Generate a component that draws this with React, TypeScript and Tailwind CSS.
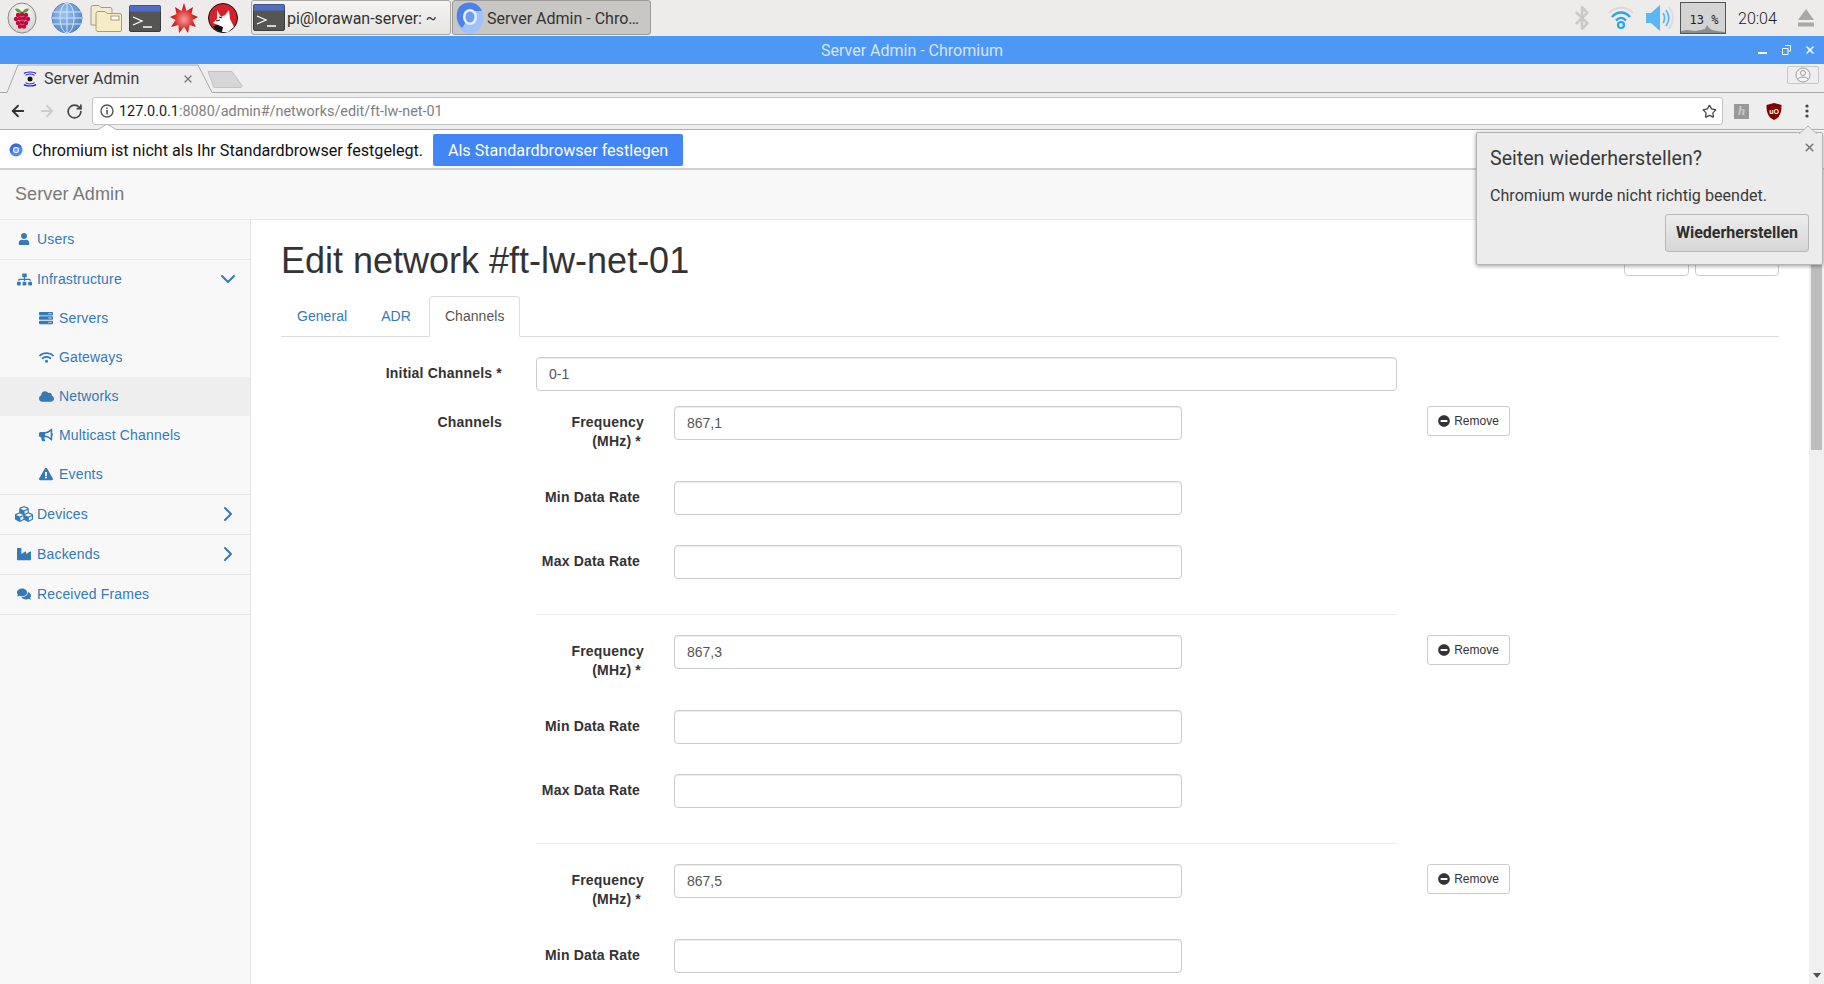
import React from "react";
import { ArrowLeft, ArrowRight, RotateCw, Star, X, ChevronDown, ChevronRight, Bluetooth } from "lucide-react";
import { FaUser, FaSitemap, FaServer, FaWifi, FaCloud, FaBullhorn, FaExclamationTriangle, FaCubes, FaIndustry, FaComments, FaMinusCircle } from "react-icons/fa";

const Raspberry = () => (
  <svg width="30" height="32" viewBox="0 0 30 32" className="shrink-0">
    <defs>
      <radialGradient id="rb" cx="50%" cy="35%" r="70%"><stop offset="0%" stopColor="#ffffff" /><stop offset="100%" stopColor="#cfcdc9" /></radialGradient>
    </defs>
    <ellipse cx="15" cy="16" rx="14" ry="15" fill="url(#rb)" stroke="#8a8a86" />
    <path d="M15 10C12 6 9 6 8 7c1 3 4 4 7 4 3 0 6-1 7-4-1-1-4-1-7 3z" fill="#5aa02c" />
    {[[11,13],[15,12.5],[19,13],[9,17],[13,16.5],[17,16.5],[21,17],[11,21],[15,20.5],[19,21],[13,24.5],[17,24.5]].map(([x,y],i)=>(
      <circle key={i} cx={x} cy={y} r="2.2" fill="#c7053d" />
    ))}
  </svg>
);
const Globe = () => (
  <svg width="32" height="32" viewBox="0 0 32 32" className="shrink-0">
    <defs><radialGradient id="gl" cx="40%" cy="35%" r="75%"><stop offset="0%" stopColor="#9cc3ee" /><stop offset="100%" stopColor="#4a82c8" /></radialGradient></defs>
    <circle cx="16" cy="16" r="15" fill="url(#gl)" stroke="#5a84b8" />
    <g stroke="#d6e6f7" strokeWidth="1" fill="none">
      <ellipse cx="16" cy="16" rx="7" ry="15" /><path d="M16 1v30M2 10h28M1 16h30M2 22h28" />
    </g>
  </svg>
);
const Folders = () => (
  <svg width="32" height="28" viewBox="0 0 32 28" className="shrink-0">
    <path d="M1 3.500a2 2 0 0 1 2-2h6l2 2h9a2 2 0 0 1 2 2V21H1z" fill="#f3ecd2" stroke="#a69a78" />
    <path d="M6 9.500a2 2 0 0 1 2-2h7l2 2h13a1.500 1.500 0 0 1 1.500 1.500v15a1.500 1.500 0 0 1-1.500 1.500H8a2 2 0 0 1-2-2z" fill="#f6edc6" stroke="#a69a78" />
    <rect x="21" y="12" width="8" height="4" fill="#fff" stroke="#a69a78" />
  </svg>
);
const Terminal = ({ w = 32, h = 27 }: { w?: number; h?: number }) => (
  <svg width={w} height={h} viewBox="0 0 32 27" className="shrink-0">
    <rect x="0.500" y="0.500" width="31" height="26" rx="1.500" fill="#555553" stroke="#3c3c3c" />
    <rect x="0.500" y="0.500" width="31" height="6" fill="#4f6fc4" />
    <path d="M4 12l9 4-9 4" stroke="#fff" fill="none" strokeWidth="1.300" />
    <path d="M14 22h9" stroke="#fff" strokeWidth="1.500" />
  </svg>
);
const Burst = () => (
  <svg width="28" height="30" viewBox="0 0 28 30" className="shrink-0">
    <defs><radialGradient id="bu" cx="50%" cy="55%" r="55%"><stop offset="0%" stopColor="#f6a0a0" /><stop offset="60%" stopColor="#dc2c2c" /><stop offset="100%" stopColor="#a80f0f" /></radialGradient></defs>
    <polygon points="14,0 16.500,8 23,4 21.500,11 28,14 22.500,17 26,24 19.500,22 18,30 14,24 9,30 8.500,22 1,24 5.500,17 0,14 6.500,11 5,4 11.500,8" fill="url(#bu)" />
  </svg>
);
const Fox = () => (
  <svg width="30" height="30" viewBox="0 0 30 30" className="shrink-0">
    <circle cx="15" cy="15" r="14.500" fill="#d8202a" stroke="#111" strokeWidth="1" />
    <path d="M5 24a14 14 0 0 0 18 3l-4-6-8-1z" fill="#111" />
    <path d="M9 7l4 7 4-2 4-5 1 9 4 8-6 5h-6l1-5-5-2-5-2 4-4z" fill="#fff" />
    <path d="M8 18l4-1M11 14l3 1" stroke="#111" strokeWidth="1" fill="none" />
  </svg>
);
const ChromiumLogo = () => (
  <svg width="28" height="32" viewBox="0 0 28 32" className="shrink-0">
    <ellipse cx="14" cy="16" rx="13.500" ry="15.500" fill="#9fc3f8" />
    <path d="M14 .5C7 .5 2 4 1 11c-1 6 1 11 5 15l6-9-1-8h15C24 4 19 .5 14 .5z" fill="#4c82e8" />
    <ellipse cx="14" cy="15" rx="7" ry="8" fill="#e8eefb" />
    <ellipse cx="14" cy="15" rx="4.500" ry="5.500" fill="#6b9df0" />
  </svg>
);
const Favicon = () => (
  <svg width="14" height="16" viewBox="0 0 14 16" className="shrink-0">
    <circle cx="7" cy="8" r="2.500" fill="#111" />
    <path d="M2.500 4.500C4 2.500 10 2.500 11.500 4.500M1 2.500C3 .5 11 .5 13 2.500M2.500 11.500C4 13.500 10 13.500 11.500 11.500M1 13.500C3 15.500 11 15.500 13 13.500" stroke="#1414e0" strokeWidth="1.200" fill="none" />
  </svg>
);
const Wifi = () => (
  <svg width="26" height="24" viewBox="0 0 26 24" className="shrink-0">
    <path d="M1 7C8 0 18 0 25 7" stroke="#d9d9d9" strokeWidth="2" fill="none" />
    <path d="M4 11C9 5 17 5 22 11M8 14.500C11 11 15 11 18 14.500" stroke="#2aa3f3" strokeWidth="2.400" fill="none" />
    <circle cx="13" cy="19" r="3" stroke="#2aa3f3" strokeWidth="2.200" fill="none" />
  </svg>
);
const Speaker = () => (
  <svg width="28" height="26" viewBox="0 0 28 26" className="shrink-0">
    <path d="M0 8h5l9-8v26l-9-8H0z" fill="#5ab7f5" />
    <path d="M17 8c2 3 2 7 0 10M20 5c3.500 5 3.500 11 0 16" stroke="#5ab7f5" strokeWidth="1.800" fill="none" />
    <path d="M23 2c5 7 5 15 0 22" stroke="#dcdcdc" strokeWidth="1.800" fill="none" />
  </svg>
);
const Eject = () => (
  <svg width="18" height="18" viewBox="0 0 18 18" className="shrink-0">
    <path d="M9 0l8 11H1z" fill="#a8a8a8" /><rect x="1" y="13.500" width="16" height="4" fill="#a8a8a8" />
  </svg>
);
const Shield = () => (
  <svg width="16" height="17" viewBox="0 0 16 17" className="shrink-0">
    <path d="M8 0l7.500 2c0 7-1 12-7.500 15C1.500 14 .5 9 .5 2z" fill="#800000" />
    <text x="8" y="10.500" textAnchor="middle" fontSize="7" fontWeight="700" fill="#fff" fontFamily="Liberation Sans, sans-serif">uO</text>
  </svg>
);
const Dots = () => (
  <svg width="4" height="14" viewBox="0 0 4 14"><circle cx="2" cy="2" r="1.600" fill="#444" /><circle cx="2" cy="7" r="1.600" fill="#444" /><circle cx="2" cy="12" r="1.600" fill="#444" /></svg>
);
const InfoCircle = () => (
  <svg width="14" height="14" viewBox="0 0 14 14" className="shrink-0">
    <circle cx="7" cy="7" r="6" fill="none" stroke="#555" strokeWidth="1.400" />
    <rect x="6.200" y="6" width="1.600" height="4.500" fill="#555" /><rect x="6.200" y="3.500" width="1.600" height="1.600" fill="#555" />
  </svg>
);
const SmallChromium = () => (
  <svg width="14" height="14" viewBox="0 0 14 14" className="shrink-0">
    <circle cx="7" cy="7" r="6.500" fill="#4c8bf5" /><path d="M7 .5a6.500 6.500 0 0 1 5.800 3.500H7a3 3 0 0 0-3 3l-2 3.500A6.500 6.500 0 0 1 7 .5z" fill="#3a6fd8" />
    <circle cx="7" cy="7" r="3" fill="#fff" /><circle cx="7" cy="7" r="2" fill="#6ea2f8" />
  </svg>
);
const Profile = () => (
  <svg width="16" height="16" viewBox="0 0 16 16">
    <circle cx="8" cy="8" r="7" fill="#f4f4f4" stroke="#9a9a9a" /><circle cx="8" cy="6" r="2.500" fill="none" stroke="#9a9a9a" /><path d="M3 12c1-2.500 9-2.500 10 0" fill="none" stroke="#9a9a9a" />
  </svg>
);

const Top = ({ icon, label, chevron }: { icon: React.ReactNode; label: string; chevron?: "down" | "right" }) => (
  <div className="h-[39px] flex items-center pl-[15px] pr-[10px] pb-px">
    <span className="w-[18px] flex justify-center shrink-0">{icon}</span>
    <span className="ml-1 tracking-[0.17px]">{label}</span>
    {chevron === "down" && <ChevronDown size={24} strokeWidth={2} className="ml-auto" />}
    {chevron === "right" && <ChevronRight size={24} strokeWidth={2} className="ml-auto" />}
  </div>
);
const Sub = ({ icon, label, active }: { icon: React.ReactNode; label: string; active?: boolean }) => (
  <div className={"h-[39px] flex items-center pl-[37px] pb-px " + (active ? "bg-[#eeeeee]" : "")}>
    <span className="w-[18px] flex justify-center shrink-0">{icon}</span>
    <span className="ml-1 tracking-[0.17px]">{label}</span>
  </div>
);

const inputCls = "h-[34px] border border-[#cccccc] rounded bg-white px-3 text-sm text-[#555555] flex items-center shadow-[inset_0_1px_1px_rgba(0,0,0,0.075)]";
const labelCls = "text-right font-bold pt-[7px] leading-[19px] text-[#333333] tracking-[0.19px]";

const Channel = ({ freq, partial }: { freq: string; partial?: boolean }) => (
  <div className="flex items-start">
    <div className="w-[861px]">
      <div className="flex h-[75px]">
        <div className={labelCls + " w-[108px]"}>
          <div>Frequency</div>
          <div className="pr-[3px]">(MHz) *</div>
        </div>
        <div className={inputCls + " ml-[30px] w-[508px]"}>{freq}</div>
      </div>
      <div className="flex h-[64px]">
        <div className={labelCls + " w-[104px] whitespace-nowrap"}>Min Data Rate</div>
        <div className={inputCls + " ml-[34px] w-[508px]"}></div>
      </div>
      {!partial && (
        <>
          <div className="flex h-[69px]">
            <div className={labelCls + " w-[104px] whitespace-nowrap"}>Max Data Rate</div>
            <div className={inputCls + " ml-[34px] w-[508px]"}></div>
          </div>
          <div className="h-px bg-[#eeeeee] mb-5"></div>
        </>
      )}
    </div>
    <div className="ml-[30px] w-[83px] h-[30px] border border-[#cccccc] rounded-[3px] bg-white flex items-center justify-center gap-1 text-xs text-[#333333]">
      <FaMinusCircle size={12} />
      <span>Remove</span>
    </div>
  </div>
);

export default function App() {
  return (
    <div className="relative w-[1824px] h-[984px] overflow-hidden flex flex-col bg-white font-['Liberation_Sans',Arial,sans-serif] text-sm">
      {/* panel */}
      <div className="h-9 shrink-0 bg-[#edecea] flex items-center font-['Roboto',sans-serif] text-base text-[#333333]">
        <div className="ml-[7px]"><Raspberry /></div>
        <div className="ml-[14px]"><Globe /></div>
        <div className="ml-[7px]"><Folders /></div>
        <div className="ml-[7px]"><Terminal /></div>
        <div className="ml-[9px]"><Burst /></div>
        <div className="ml-[10px]"><Fox /></div>
        <div className="ml-[13px] w-[200px] h-[35px] self-start border border-[#a8a8a4] rounded-[3px] bg-gradient-to-b from-[#f4f3f1] to-[#e6e5e2] flex items-center pl-[1px] overflow-hidden">
          <Terminal />
          <span className="ml-[2px] pt-[2px] whitespace-nowrap tracking-[-0.05px]">pi@lorawan-server: ~</span>
        </div>
        <div className="ml-[1px] w-[199px] h-[35px] self-start border border-[#9c9a96] rounded-[3px] bg-[#c9c7c3] flex items-center pl-[3px] overflow-hidden">
          <ChromiumLogo />
          <span className="ml-[3px] pt-[2px] whitespace-nowrap">Server Admin - Chro…</span>
        </div>
        <div className="ml-auto"><Bluetooth size={26} strokeWidth={2.4} className="text-[#c9c9c9]" /></div>
        <div className="ml-[13px]"><Wifi /></div>
        <div className="ml-[12px]"><Speaker /></div>
        <div className="ml-[6px] relative w-[46px] h-[32px] bg-[#d4d4d4] border border-[#555555] flex items-start justify-center pt-[10px] pl-[2px] overflow-hidden">
          <span className="font-['DejaVu_Sans_Mono',monospace] text-xs leading-[14px] text-[#222222] whitespace-pre relative">13 %</span>
          <svg width="44" height="8" viewBox="0 0 44 8" className="absolute bottom-0 left-0"><path d="M0 8V6l6-1 8 1 6-1 4-1 2-4 2 3 3 2 5 1 8 1v2z" fill="#8c8c8c" /></svg>
        </div>
        <div className="ml-[12px] w-[40px] pt-[2px] text-[#222222] font-light">20:04</div>
        <div className="ml-[19px] mr-[9px]"><Eject /></div>
      </div>
      {/* title bar */}
      <div className="relative h-7 shrink-0 bg-[#4d98f5] flex items-center justify-center font-['Roboto',sans-serif] text-base text-[#d6e6fb]">
        <span className="pt-[2px]">Server Admin - Chromium</span>
        <div className="absolute right-[8px] top-0 h-7 flex items-center">
          <svg width="9" height="10" viewBox="0 0 9 10"><rect y="7" width="9" height="2" fill="#fff" /></svg>
          <svg width="9" height="10" viewBox="0 0 9 10" className="ml-[15px]"><path d="M3 .5h5.500v5.500H6.500M.5 3.500h5.500v6H.5z" fill="none" stroke="#fff" /></svg>
          <X size={12} strokeWidth={3} className="text-white ml-[13px]" />
        </div>
      </div>
      {/* tab strip */}
      <div className="relative h-[29px] shrink-0 bg-[#eeeeee] font-['Roboto',sans-serif] text-base text-[#3b3b3b]">
        <svg width="1824" height="29" viewBox="0 0 1824 29" className="absolute inset-0">
          <path d="M0 28.500H7L18 1H198L212 28.500H1824" fill="none" stroke="#a8a8a8" />
          <path d="M208 7.500h24l10 14a2 2 0 0 1-2 2H214z" fill="#d6d6d6" stroke="#c2c2c2" />
        </svg>
        <div className="relative h-[29px] flex items-center pl-[23px] w-[194px]">
          <Favicon />
          <span className="ml-[7px] whitespace-nowrap">Server Admin</span>
          <X size={12} strokeWidth={2.5} className="ml-auto text-[#777777]" />
        </div>
        <div className="absolute right-[5px] top-[2px] w-[32px] h-[18px] border border-[#c8c8c8] rounded-[2px] flex items-center justify-center"><Profile /></div>
      </div>
      {/* toolbar */}
      <div className="relative h-[37px] shrink-0 bg-[#eeeeee] border-b border-[#b0b0b0] flex items-center font-['Roboto',sans-serif] text-[14.4px]">
        <ArrowLeft size={18} strokeWidth={2.4} className="ml-[9px] text-[#333333]" />
        <ArrowRight size={18} strokeWidth={2.4} className="ml-[11px] text-[#cccccc]" />
        <RotateCw size={17} strokeWidth={2.4} className="ml-[10px] text-[#444444]" />
        <div className="ml-[9px] w-[1631px] h-[28px] bg-white border border-[#c4c4c4] rounded-[3px] flex items-center pl-[7px] pr-[4px]">
          <InfoCircle />
          <span className="ml-[5px] pt-[3px] text-[#1a1a1a]">127.0.0.1</span>
          <span className="pt-[3px] text-[#808080]">:8080/admin#/networks/edit/ft-lw-net-01</span>
          <Star size={15} strokeWidth={2} className="ml-auto mr-[1px] text-[#444444]" />
        </div>
        <div className="ml-[11px] w-[15px] h-[15px] bg-[#999999] flex items-center justify-center font-['Liberation_Serif',serif] italic font-bold text-[13px] text-[#c8c8c8]">h</div>
        <div className="ml-[17px]"><Shield /></div>
        <div className="ml-[23px]"><Dots /></div>
        <svg width="20" height="6" viewBox="0 0 20 6" className="absolute left-[97px] bottom-[-1px]"><path d="M0 6L10 0l10 6z" fill="#fff" /><path d="M0 6L10 0l10 6" fill="none" stroke="#b0b0b0" /></svg>
      </div>
      {/* info bar */}
      <div className="h-10 shrink-0 bg-white shadow-[inset_0_-2px_0_#d0d0d0] flex items-center pl-[9px] font-['Roboto',sans-serif] text-[16.15px] text-[#111111]">
        <SmallChromium />
        <span className="ml-[9px] pt-[2px]">Chromium ist nicht als Ihr Standardbrowser festgelegt.</span>
        <div className="ml-[10px] w-[250px] h-[32px] pt-[2px] bg-[#4285f4] rounded-[2px] text-white flex items-center justify-center">Als Standardbrowser festlegen</div>
      </div>
      {/* page */}
      <div className="flex-1 flex min-h-0">
        <div className="flex-1 min-w-0 flex flex-col">
          <div className="h-[50px] shrink-0 bg-[#f8f8f8] border-b border-[#e7e7e7] flex items-center pl-[15px] pb-[2px] text-lg tracking-[0.1px] text-[#777777]">Server Admin</div>
          <div className="flex-1 flex min-h-0">
            <div className="w-[251px] shrink-0 bg-[#f8f8f8] border-r border-[#e7e7e7] text-[#337ab7]">
              <div className="border-b border-[#e7e7e7]"><Top icon={<FaUser size={12} />} label="Users" /></div>
              <div className="border-b border-[#e7e7e7]">
                <Top icon={<FaSitemap size={15} />} label="Infrastructure" chevron="down" />
                <Sub icon={<FaServer size={14} />} label="Servers" />
                <Sub icon={<FaWifi size={15} />} label="Gateways" />
                <Sub icon={<FaCloud size={15} />} label="Networks" active />
                <Sub icon={<FaBullhorn size={14} />} label="Multicast Channels" />
                <Sub icon={<FaExclamationTriangle size={14} />} label="Events" />
              </div>
              <div className="border-b border-[#e7e7e7]"><Top icon={<FaCubes size={18} />} label="Devices" chevron="right" /></div>
              <div className="border-b border-[#e7e7e7]"><Top icon={<FaIndustry size={14} />} label="Backends" chevron="right" /></div>
              <div className="border-b border-[#e7e7e7]"><Top icon={<FaComments size={14} />} label="Received Frames" /></div>
            </div>
            <div className="flex-1 min-w-0 pl-[30px] pr-[30px] overflow-hidden text-[#333333]">
              <div className="h-[76px] flex justify-between">
                <h1 className="pt-[21px] text-[36px] leading-[40px] font-normal text-[#333333]">Edit network #ft-lw-net-01</h1>
                <div className="flex gap-[6px] pt-[22px]">
                  <div className="w-[65px] h-[34px] border border-[#cccccc] rounded"></div>
                  <div className="w-[84px] h-[34px] border border-[#cccccc] rounded"></div>
                </div>
              </div>
              <div className="h-[41px] border-b border-[#dddddd] flex tracking-[0.05px]">
                <div className="px-4 mr-[2px] h-[41px] pb-[2px] flex items-center text-[#337ab7]">General</div>
                <div className="px-4 mr-[2px] h-[41px] pb-[2px] flex items-center text-[#337ab7]">ADR</div>
                <div className="px-[15px] h-[41px] pb-[2px] flex items-center text-[#555555] bg-white border border-[#dddddd] border-b-white rounded-t">Channels</div>
              </div>
              <div className="flex mt-5 mb-[15px]">
                <div className={labelCls + " w-[221px]"}>Initial Channels *</div>
                <div className={inputCls + " ml-[34px] w-[861px]"}>0-1</div>
              </div>
              <div className="flex">
                <div className={labelCls + " w-[221px]"}>Channels</div>
                <div className="ml-[34px]">
                  <Channel freq="867,1" />
                  <Channel freq="867,3" />
                  <Channel freq="867,5" partial />
                </div>
              </div>
            </div>
          </div>
        </div>
        <div className="relative w-[15px] shrink-0 bg-[#f0f0f0]">
          <div className="ml-[2px] mt-[20px] w-[11px] h-[260px] bg-[#bdbdbd]"></div>
          <svg width="8" height="5" viewBox="0 0 8 5" className="absolute bottom-[6px] left-[3.500px]"><path d="M0 0h8L4 5z" fill="#505050" /></svg>
        </div>
      </div>
      {/* restore bubble */}
      <div className="absolute left-[1476px] top-[132px] w-[347px] h-[133px] bg-[#ececec] border border-[#b4b4b4] rounded-[2px] shadow-[0_1px_4px_rgba(0,0,0,0.4)] font-['Roboto',sans-serif] text-[#3a3a3a]">
        <svg width="18" height="8" viewBox="0 0 18 8" className="absolute right-[5px] top-[-7px]"><path d="M0 8L9 0l9 8z" fill="#ececec" /><path d="M0 8L9 0l9 8" fill="none" stroke="#b4b4b4" /></svg>
        <X size={13} strokeWidth={3} className="absolute right-[6px] top-[8px] text-[#777777]" />
        <div className="absolute left-[13px] top-[13px] text-[19.6px] leading-[26px] whitespace-nowrap">Seiten wiederherstellen?</div>
        <div className="absolute left-[13px] top-[52px] text-[16.1px] leading-[22px] whitespace-nowrap">Chromium wurde nicht richtig beendet.</div>
        <div className="absolute right-[13px] top-[81px] w-[144px] h-[38px] border border-[#b8b8b8] rounded-[3px] bg-gradient-to-b from-[#ededed] to-[#d6d6d6] flex items-center justify-center text-base font-bold text-[#2e2e2e]">Wiederherstellen</div>
      </div>
    </div>
  );
}
